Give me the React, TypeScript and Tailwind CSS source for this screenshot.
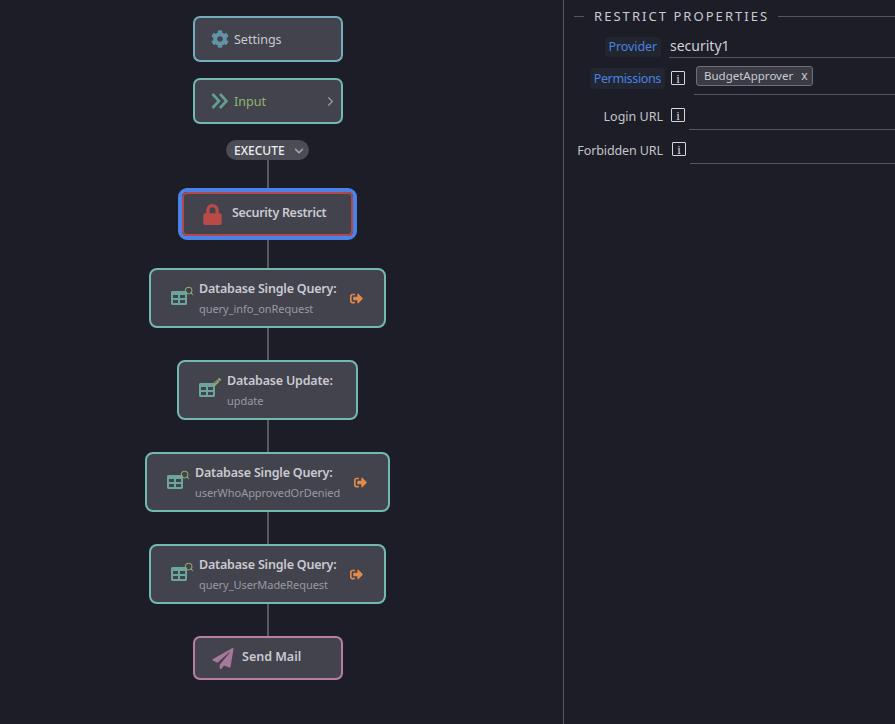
import { ReactNode } from 'react';
import { ChevronDown, ChevronRight, Search } from 'lucide-react';
import { FaCog, FaLock, FaPaperPlane, FaPencilAlt, FaSignOutAlt, FaTable } from 'react-icons/fa';

const Connector = ({ h }: { h: string }) => <div className={`w-[2px] bg-[#5a5b63] ${h}`} />;

const SimpleNode = ({ icon, label, border, text, chevron }: { icon: ReactNode; label: string; border: string; text: string; chevron?: boolean }) => (
  <div className={`relative flex h-[46px] w-[150px] items-center rounded-[7px] border-2 bg-[#42434d] pl-[16px] ${border}`}>
    <div className="flex w-[23px] justify-start">{icon}</div>
    <span className={`mt-[3px] text-[12.5px] ${text}`}>{label}</span>
    {chevron && <ChevronRight className="absolute right-[3px] top-[14px] h-[15px] w-[15px] text-[#96979e]" strokeWidth={2} />}
  </div>
);

const DbNode = ({ title, name, width, pencil, exit }: { title: string; name: string; width: string; pencil?: boolean; exit?: boolean }) => (
  <div className={`mr-[1px] flex h-[60px] items-center rounded-[8px] border-2 border-[#74b9ae] bg-[#42434d] pl-[20px] ${width}`}>
    <div className="relative h-[24px] w-[24px] shrink-0">
      <FaTable className="absolute left-0 top-[4px] h-[16px] w-[16px] text-[#6aa69c]" />
      {pencil ? (
        <FaPencilAlt className="absolute right-[2px] top-0 h-[9px] w-[9px] text-[#8fa86e]" />
      ) : (
        <Search className="absolute right-[1px] top-0 h-[10px] w-[10px] text-[#8fa86e]" strokeWidth={2.5} />
      )}
    </div>
    <div className="ml-[4px] flex flex-col pt-[1px]">
      <span className="text-[12.5px] leading-[18px] font-semibold tracking-[-0.2px] text-[#c9cad0]">{title}</span>
      <span className="mt-[3px] text-[11px] leading-[16px] tracking-[-0.05px] text-[#989aa1]">{name}</span>
    </div>
    {exit && <FaSignOutAlt className="ml-auto mr-[21px] h-[13px] w-[13px] text-[#e08a4b]" />}
  </div>
);

const Info = () => (
  <span className="flex h-[14px] w-[14px] items-center justify-center rounded-[1px] border border-[#d6d7db] text-[13px] leading-none text-[#d6d7db] [font-family:'Liberation_Serif',serif]">
    i
  </span>
);

export default function App() {
  return (
    <div className="flex h-[724px] w-[895px] overflow-hidden bg-[#1c1d27] [font-family:'Noto_Sans',sans-serif]">
      {/* Flow canvas */}
      <div className="flex w-[563px] shrink-0 flex-col pt-[16px]">
        <div className="flex w-[536px] flex-col items-center">
          <SimpleNode
            icon={<FaCog className="h-[18px] w-[18px] text-[#5f93a5]" />}
            label="Settings"
            border="border-[#74aebd]"
            text="text-[#c9cad0]"
          />
          <div className="h-[16px]" />
          <SimpleNode
            icon={
              <svg viewBox="0 0 18 16" className="h-[16px] w-[18px] text-[#639f93]" fill="none" stroke="currentColor" strokeWidth="2.6">
                <polyline points="1.5,1 8,8 1.5,15" />
                <polyline points="9,1 15.5,8 9,15" />
              </svg>
            }
            label="Input"
            border="border-[#74b9ae]"
            text="text-[#8fb56f]"
            chevron
          />
          <div className="h-[16px]" />
          <div className="mr-[1px] flex h-[20px] w-[83px] items-center rounded-full bg-[#4b4c55] pl-[8px] text-[12px] font-medium text-[#eeeef0]">
            <span className="mt-[1px]">EXECUTE</span>
            <ChevronDown className="ml-[7px] mt-[1px] h-[14px] w-[14px] text-[#a9aab0]" strokeWidth={2.5} />
          </div>
          <Connector h="h-[28px]" />
          <div className="mr-[1px] rounded-[9px] border-[4px] border-[#4a82e8]">
            <div className="flex h-[44px] w-[171px] items-center rounded-[5px] border-2 border-[#b04a4a] bg-[#42434d] pl-[19px]">
              <FaLock className="h-[21px] w-[19px] text-[#b94a48]" />
              <span className="mb-[1px] ml-[10px] text-[12.5px] font-semibold tracking-[-0.3px] text-[#c9cad0]">Security Restrict</span>
            </div>
          </div>
          <Connector h="h-[28px]" />
          <DbNode title="Database Single Query:" name="query_info_onRequest" width="w-[237px]" exit />
          <Connector h="h-[32px]" />
          <DbNode title="Database Update:" name="update" width="w-[181px]" pencil />
          <Connector h="h-[32px]" />
          <DbNode title="Database Single Query:" name="userWhoApprovedOrDenied" width="w-[245px]" exit />
          <Connector h="h-[32px]" />
          <DbNode title="Database Single Query:" name="query_UserMadeRequest" width="w-[237px]" exit />
          <Connector h="h-[32px]" />
          <div className="flex h-[44px] w-[150px] items-center rounded-[7px] border-2 border-[#b87fa3] bg-[#42434d] pl-[17px]">
            <FaPaperPlane className="h-[21px] w-[22px] text-[#a8779a]" />
            <span className="mb-[1px] ml-[8px] text-[12.5px] font-semibold text-[#c9cad0]">Send Mail</span>
          </div>
        </div>
      </div>

      {/* Properties panel */}
      <div className="flex min-w-0 flex-1 flex-col border-l border-[#55565d] pt-[5px]">
        <div className="flex h-[22px] items-center pl-[10px]">
          <div className="h-px w-[10px] bg-[#55565d]" />
          <span className="ml-[10px] mt-[1px] text-[13px] tracking-[2.05px] text-[#c9cad0]">RESTRICT PROPERTIES</span>
          <div className="ml-[9px] h-px flex-1 bg-[#55565d]" />
        </div>

        <div className="mt-[9px] flex h-[22px] items-center">
          <div className="flex w-[97px] justify-end">
            <span className="rounded-[3px] bg-[#21252f] px-[4px] text-[12.5px] leading-[20px] tracking-[-0.1px] text-[#4a82e0]">Provider</span>
          </div>
          <div className="ml-[8px] flex h-[22px] flex-1 items-center border-b border-[#55565d] pb-[2px] pl-[1px] text-[14px] text-[#cfd0d5]">
            security1
          </div>
        </div>

        <div className="flex h-[37px] items-start">
          <div className="mt-[10px] flex w-[101px] justify-end">
            <span className="rounded-[4px] bg-[#212632] px-[4px] pt-[1px] text-[12.5px] leading-[20px] tracking-[-0.35px] text-[#4a82e0]">Permissions</span>
          </div>
          <div className="ml-[6px] mt-[13px]"><Info /></div>
          <div className="ml-[9px] h-full flex-1 border-b border-[#55565d] pl-[2px] pt-[8px]">
            <div className="flex h-[20px] w-[117px] items-center rounded-[3px] border border-[#6d6e76] bg-[#3a3b44] pl-[7px] text-[11.5px] text-[#c9cad0]">
              BudgetApprover
              <span className="ml-[8px] text-[12px]">x</span>
            </div>
          </div>
        </div>

        <div className="flex h-[35px] items-start">
          <div className="mt-[12px] w-[99px] text-right text-[12.5px] leading-[20px] text-[#c4c5cb]">Login URL</div>
          <div className="ml-[8px] mt-[13px]"><Info /></div>
          <div className="ml-[4px] h-full flex-1 border-b border-[#55565d]" />
        </div>

        <div className="flex h-[34px] items-start">
          <div className="mt-[11px] w-[99px] text-right text-[12.5px] leading-[20px] tracking-[-0.1px] text-[#c4c5cb]">Forbidden URL</div>
          <div className="ml-[9px] mt-[12px]"><Info /></div>
          <div className="ml-[4px] h-full flex-1 border-b border-[#55565d]" />
        </div>
      </div>
    </div>
  );
}
